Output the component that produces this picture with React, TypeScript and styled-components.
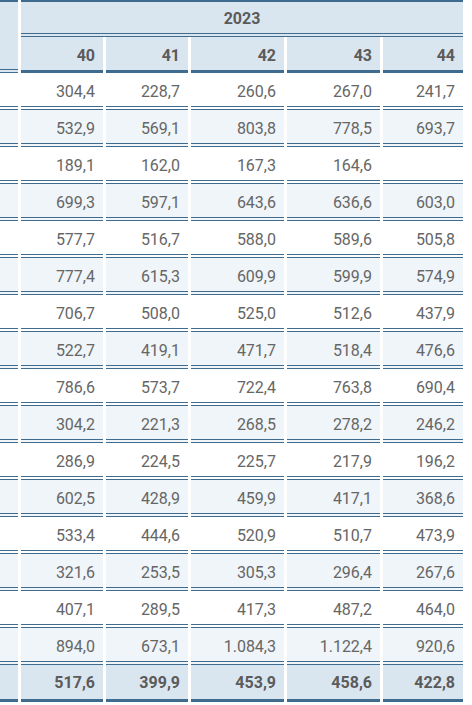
import React from 'react';
import styled, { createGlobalStyle } from 'styled-components';

const LINE = '#3f6b8f';
const HEAD_BG = '#dae6ef';
const ALT_BG = '#eff5f9';

const GlobalStyle = createGlobalStyle`
    html, body {
        margin: 0;
        padding: 0;
        background: #ffffff;
    }
    body {
        font-family: Roboto, 'Liberation Sans', Arial, sans-serif;
    }
`;

const Scroller = styled.div`
    width: 472px;
    height: 705px;
    overflow: hidden;
`;

const Table = styled.table`
    border-collapse: separate;
    border-spacing: 3px 0;
    margin-left: -3px;
    font-size: 16px;
    color: #666666;
`;

const HeadCell = styled.th<{ $top?: boolean; $stub?: boolean; $center?: boolean }>`
    background: ${HEAD_BG};
    color: #5b5b5b;
    font-weight: 700;
    text-align: ${({ $center }) => ($center ? 'center' : 'right')};
    padding: ${({ $top }) => ($top ? '1px 8px 0 8px' : '3px 8px 0 0')};
    box-sizing: border-box;
    border-top: ${({ $top }) => ($top ? `2px solid ${LINE}` : 'none')};
    border-bottom: ${({ $top }) => ($top ? `4px double ${LINE}` : `3px solid ${LINE}`)};
    height: ${({ $top }) => ($top ? '37px' : '36px')};
    ${({ $stub }) => ($stub ? 'width: 18px; padding: 0;' : '')}
`;

const Cell = styled.td<{ $alt?: boolean; $total?: boolean; $width?: number }>`
    background: ${({ $alt, $total }) => ($total ? HEAD_BG : $alt ? ALT_BG : '#ffffff')};
    font-weight: ${({ $total }) => ($total ? 700 : 400)};
    color: ${({ $total }) => ($total ? '#5b5b5b' : '#666666')};
    text-align: right;
    padding: ${({ $total }) => ($total ? '0 8px 0 0' : '3px 8px 0 0')};
    height: 37px;
    box-sizing: border-box;
    border-bottom: ${({ $total }) => ($total ? `3px solid ${LINE}` : `4px double ${LINE}`)};
    white-space: nowrap;
    width: ${({ $width }) => ($width ? `${$width}px` : 'auto')};
`;

const StubCell = styled(Cell)`
    padding: 0;
    width: 18px;
`;

const weeks = ['40', '41', '42', '43', '44'];
const widths = [82, 82, 93, 93, 80];

const rows: string[][] = [
    ['304,4', '228,7', '260,6', '267,0', '241,7'],
    ['532,9', '569,1', '803,8', '778,5', '693,7'],
    ['189,1', '162,0', '167,3', '164,6', ''],
    ['699,3', '597,1', '643,6', '636,6', '603,0'],
    ['577,7', '516,7', '588,0', '589,6', '505,8'],
    ['777,4', '615,3', '609,9', '599,9', '574,9'],
    ['706,7', '508,0', '525,0', '512,6', '437,9'],
    ['522,7', '419,1', '471,7', '518,4', '476,6'],
    ['786,6', '573,7', '722,4', '763,8', '690,4'],
    ['304,2', '221,3', '268,5', '278,2', '246,2'],
    ['286,9', '224,5', '225,7', '217,9', '196,2'],
    ['602,5', '428,9', '459,9', '417,1', '368,6'],
    ['533,4', '444,6', '520,9', '510,7', '473,9'],
    ['321,6', '253,5', '305,3', '296,4', '267,6'],
    ['407,1', '289,5', '417,3', '487,2', '464,0'],
    ['894,0', '673,1', '1.084,3', '1.122,4', '920,6'],
];

const total = ['517,6', '399,9', '453,9', '458,6', '422,8'];

export default function App() {
    return (
        <>
            <GlobalStyle />
            <Scroller>
                <Table>
                    <thead>
                        <tr>
                            <HeadCell $top $stub rowSpan={2} />
                            <HeadCell $top $center colSpan={5}>2023</HeadCell>
                        </tr>
                        <tr>
                            {weeks.map((w, i) => (
                                <HeadCell key={w} style={{ width: widths[i] }}>{w}</HeadCell>
                            ))}
                        </tr>
                    </thead>
                    <tbody>
                        {rows.map((r, ri) => (
                            <tr key={ri}>
                                <StubCell $alt={ri % 2 === 1} />
                                {r.map((v, ci) => (
                                    <Cell key={ci} $alt={ri % 2 === 1} $width={widths[ci]}>{v}</Cell>
                                ))}
                            </tr>
                        ))}
                        <tr>
                            <StubCell $total />
                            {total.map((v, ci) => (
                                <Cell key={ci} $total $width={widths[ci]}>{v}</Cell>
                            ))}
                        </tr>
                    </tbody>
                </Table>
            </Scroller>
        </>
    );
}
